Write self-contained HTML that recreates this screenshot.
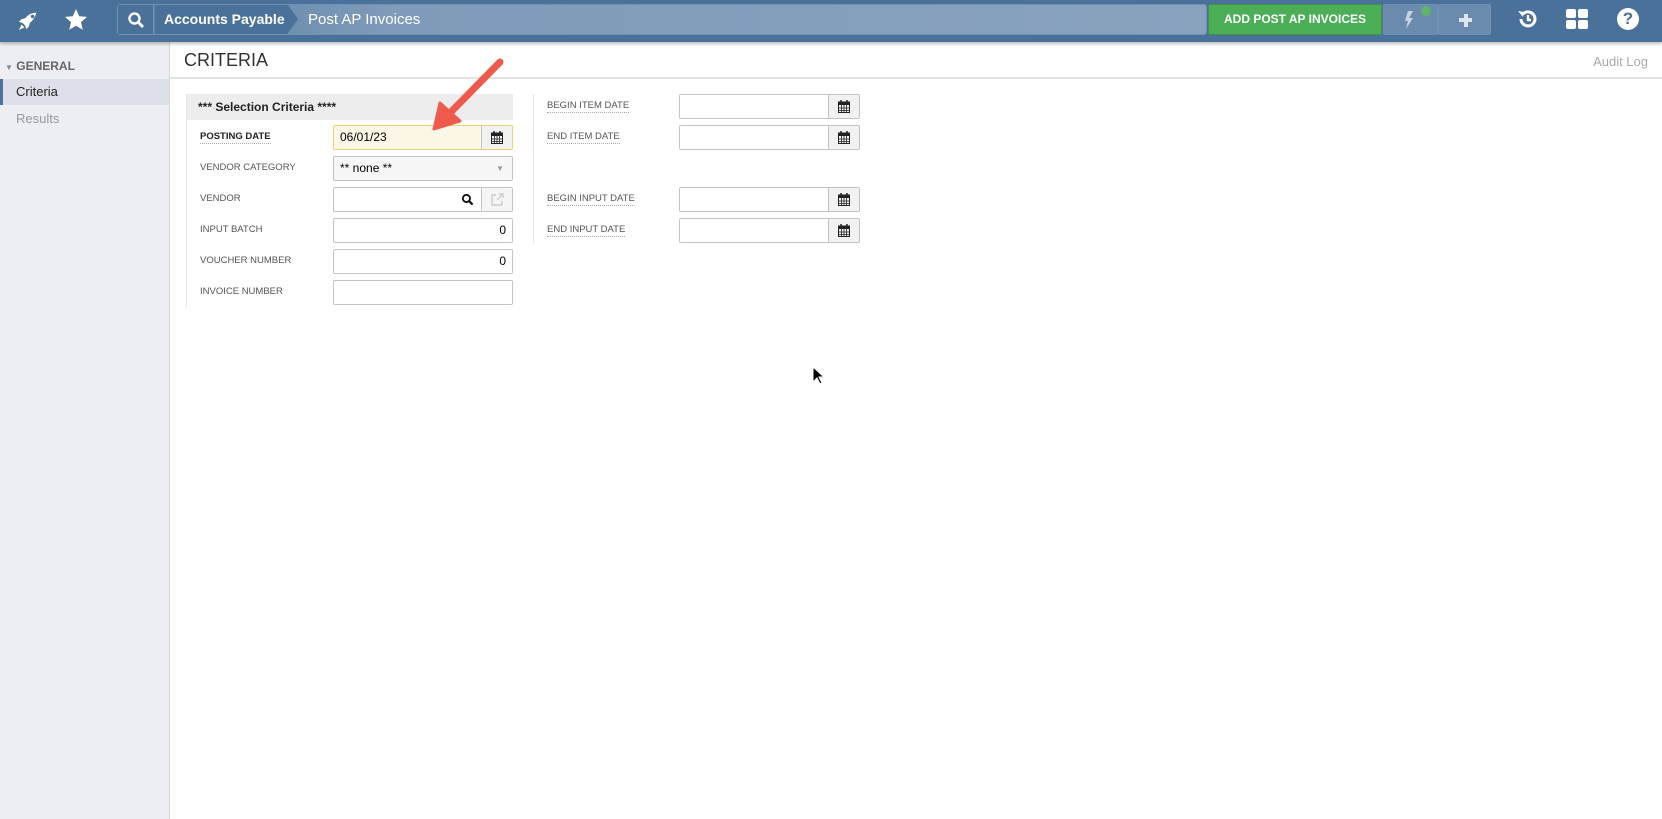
<!DOCTYPE html>
<html><head><meta charset="utf-8"><style>
*{box-sizing:border-box;margin:0;padding:0}
body{width:1662px;height:819px;overflow:hidden;font-family:"Liberation Sans",sans-serif;background:#fff;position:relative;white-space:nowrap}
.top{position:absolute;left:0;top:0;width:1662px;height:42px;background:#4a7199;box-shadow:0 2px 3px rgba(0,0,0,.25);z-index:2}
.crumb{position:absolute;left:117px;top:4px;width:1090px;height:31px;border:1px solid #6f91b3;border-radius:3px;background:linear-gradient(90deg,#5b7ea3 0,#7e9bb9 25%,#89a3bf 100%)}
.crumb .s{position:absolute;left:0;top:0;width:36px;height:29px;border-right:1px solid #6f91b3;background:#4a7199}
.crumb .ap{position:absolute;left:37px;top:0;height:29px;width:133px;background:#4a7199;color:#fff;font-weight:bold;font-size:14px;line-height:29px;padding-left:9px}
.crumb .ar{position:absolute;left:170px;top:0;width:0;height:0;border-top:14.5px solid transparent;border-bottom:14.5px solid transparent;border-left:10px solid #4a7199}
.crumb .pi{position:absolute;left:190px;top:0;line-height:29px;color:#fff;font-size:15px}
.btn{position:absolute;top:4px;height:31px;border:1px solid #6f91b3;border-radius:2px;background:#6a8bad}
.side{position:absolute;left:0;top:42px;width:170px;height:777px;background:#edeef3;border-right:1px solid #d6d8de}
.lbl{position:absolute;font-size:9.5px;color:#555;text-transform:uppercase;border-bottom:1px dotted #aaa;line-height:12px}
.inp{position:absolute;height:25px;border:1px solid #c4c4c4;border-radius:2px;background:#fff;font-size:12px;line-height:23px;padding:0 6px}
.cal{position:absolute;right:0;top:0;width:31px;height:23px;border-left:1px solid #c4c4c4;background:#f2f2f2}
.cal svg{position:absolute;left:9px;top:5px}
</style></head><body>
<div class="top">
<svg style="position:absolute;left:17px;top:10px" width="22" height="22" viewBox="0 0 24 24"><path d="M21 3c-5 0-9 2-12 6l-4 1-3 3 4 1 3 3 1 4 3-3 1-4c4-3 6-7 7-11zM15 7a2 2 0 1 1 0 .1z" fill="#fff"/><path d="M5 16l-3 6 6-3z" fill="#fff"/></svg>
<svg style="position:absolute;left:64px;top:8px" width="24" height="24" viewBox="0 0 24 24"><path d="M12 1l3.2 7.2 7.8.7-6 5.2 1.8 7.7L12 17.8 5.2 21.8 7 14.1 1 8.9l7.8-.7z" fill="#fff"/></svg>
<div class="crumb"><div class="s"><svg style="position:absolute;left:9px;top:6px" width="18" height="18" viewBox="0 0 18 18"><circle cx="7.5" cy="7.5" r="5" stroke="#fff" stroke-width="2.4" fill="none"/><path d="M11 11l5 5" stroke="#fff" stroke-width="2.8"/></svg></div><div class="ap">Accounts Payable</div><div class="ar"></div><div class="pi">Post AP Invoices</div></div>
<div style="position:absolute;left:1208px;top:4px;width:174px;height:31px;background:#4cae57;border:1px solid #3d9448;border-radius:2px;color:#fff;font-weight:bold;font-size:12px;text-align:center;line-height:29px">ADD POST AP INVOICES</div>
<div class="btn" style="left:1383px;width:55px"><svg style="position:absolute;left:19px;top:6px" width="12" height="18" viewBox="0 0 12 18"><path d="M5 0h5L6 7h4L3 18l2-8H2z" fill="#c8d4e1"/></svg><div style="position:absolute;left:37px;top:1px;width:10px;height:10px;border-radius:50%;background:#5fb36a"></div></div>
<div class="btn" style="left:1438px;width:53px"><div style="position:absolute;left:20px;top:13px;width:13px;height:4px;background:#dde5ee"></div><div style="position:absolute;left:24.5px;top:8.5px;width:4px;height:13px;background:#dde5ee"></div></div>
<svg style="position:absolute;left:1517px;top:8px" width="22" height="22" viewBox="0 0 22 22"><path d="M4 11a7 7 0 1 0 2-5" stroke="#fff" stroke-width="3" fill="none"/><path d="M1 3l6 1-1 5z" fill="#fff"/><path d="M11 7v5h3" stroke="#fff" stroke-width="2.4" fill="none"/></svg>
<svg style="position:absolute;left:1566px;top:9px" width="22" height="20" viewBox="0 0 22 20"><rect x="0" y="0" width="10" height="9" rx="2" fill="#fff"/><rect x="12" y="0" width="10" height="9" rx="2" fill="#fff"/><rect x="0" y="11" width="10" height="9" rx="2" fill="#fff"/><rect x="12" y="11" width="10" height="9" rx="2" fill="#fff"/></svg>
<div style="position:absolute;left:1617px;top:8px;width:22px;height:22px;border-radius:50%;background:#fff;color:#4a7199;font-weight:bold;font-size:17px;text-align:center;line-height:22px">?</div>
</div>
<div class="side">
<div style="position:absolute;left:5px;top:17px;font-size:12px;font-weight:bold;color:#666"><span style="font-size:8px;color:#888">▼</span> GENERAL</div>
<div style="position:absolute;left:0;top:37px;width:169px;height:26px;background:#dde0e8;border-left:3px solid #4a7199;font-size:13px;color:#222;line-height:26px;padding-left:13px">Criteria</div>
<div style="position:absolute;left:16px;top:69px;font-size:13px;color:#999">Results</div>
</div>
<div style="position:absolute;left:184px;top:50px;font-size:18px;color:#333">CRITERIA</div>
<div style="position:absolute;right:14px;top:54px;font-size:13px;color:#aaa">Audit Log</div>
<div style="position:absolute;left:170px;top:77px;width:1492px;height:2px;background:#e2e2e2"></div>
<div style="position:absolute;left:186px;top:94px;width:1px;height:213px;background:#e6e6e6"></div>
<div style="position:absolute;left:187px;top:94px;width:326px;height:26px;background:#ededed;font-size:12px;font-weight:bold;color:#222;line-height:26px;padding-left:11px">*** Selection Criteria ****</div>
<div class="lbl" style="left:200px;top:131px;color:#222;font-weight:bold">Posting Date</div>
<div class="inp" style="left:333px;top:125px;width:180px;background:#fdf7e8;border-color:#f0cf6d">06/01/23<div class="cal"><svg width="12" height="13" viewBox="0 0 12 13"><rect x="0.5" y="2" width="11" height="10.5" fill="none" stroke="#222"/><rect x="0" y="2" width="12" height="3" fill="#222"/><path d="M3 0v3M9 0v3" stroke="#222" stroke-width="1.5"/><path d="M0 8h12M0 10.5h12M3.5 5v8M6 5v8M8.5 5v8" stroke="#222" stroke-width=".8"/></svg></div></div>
<div class="lbl" style="left:200px;top:162px;border:0">Vendor Category</div>
<div class="inp" style="left:333px;top:156px;width:180px;background:#f7f7f7">** none **<span style="position:absolute;right:8px;top:0;font-size:8px;color:#999">▼</span></div>
<div class="lbl" style="left:200px;top:193px;border:0">Vendor</div>
<div class="inp" style="left:333px;top:187px;width:180px"><svg style="position:absolute;right:38px;top:5px" width="13" height="13" viewBox="0 0 18 18"><circle cx="7.5" cy="7.5" r="5" stroke="#111" stroke-width="2.6" fill="none"/><path d="M11 11l5 5" stroke="#111" stroke-width="3"/></svg><div class="cal" style="background:#f5f5f5"><svg width="13" height="13" viewBox="0 0 13 13"><path d="M5 2H1v10h10V8" stroke="#ccc" stroke-width="1.4" fill="none"/><path d="M6 7l6-6M8 1h4v4" stroke="#ccc" stroke-width="1.4" fill="none"/></svg></div></div>
<div class="lbl" style="left:200px;top:224px;border:0">Input Batch</div>
<div class="inp" style="left:333px;top:218px;width:180px;text-align:right">0</div>
<div class="lbl" style="left:200px;top:255px;border:0">Voucher Number</div>
<div class="inp" style="left:333px;top:249px;width:180px;text-align:right">0</div>
<div class="lbl" style="left:200px;top:286px;border:0">Invoice Number</div>
<div class="inp" style="left:333px;top:280px;width:180px"></div>
<div style="position:absolute;left:533px;top:94px;width:1px;height:150px;background:#e6e6e6"></div>
<div class="lbl" style="left:547px;top:100px">Begin Item Date</div>
<div class="inp" style="left:679px;top:94px;width:181px"><div class="cal"><svg width="12" height="13" viewBox="0 0 12 13"><rect x="0.5" y="2" width="11" height="10.5" fill="none" stroke="#222"/><rect x="0" y="2" width="12" height="3" fill="#222"/><path d="M3 0v3M9 0v3" stroke="#222" stroke-width="1.5"/><path d="M0 8h12M0 10.5h12M3.5 5v8M6 5v8M8.5 5v8" stroke="#222" stroke-width=".8"/></svg></div></div>
<div class="lbl" style="left:547px;top:131px">End Item Date</div>
<div class="inp" style="left:679px;top:125px;width:181px"><div class="cal"><svg width="12" height="13" viewBox="0 0 12 13"><rect x="0.5" y="2" width="11" height="10.5" fill="none" stroke="#222"/><rect x="0" y="2" width="12" height="3" fill="#222"/><path d="M3 0v3M9 0v3" stroke="#222" stroke-width="1.5"/><path d="M0 8h12M0 10.5h12M3.5 5v8M6 5v8M8.5 5v8" stroke="#222" stroke-width=".8"/></svg></div></div>
<div class="lbl" style="left:547px;top:193px">Begin Input Date</div>
<div class="inp" style="left:679px;top:187px;width:181px"><div class="cal"><svg width="12" height="13" viewBox="0 0 12 13"><rect x="0.5" y="2" width="11" height="10.5" fill="none" stroke="#222"/><rect x="0" y="2" width="12" height="3" fill="#222"/><path d="M3 0v3M9 0v3" stroke="#222" stroke-width="1.5"/><path d="M0 8h12M0 10.5h12M3.5 5v8M6 5v8M8.5 5v8" stroke="#222" stroke-width=".8"/></svg></div></div>
<div class="lbl" style="left:547px;top:224px">End Input Date</div>
<div class="inp" style="left:679px;top:218px;width:181px"><div class="cal"><svg width="12" height="13" viewBox="0 0 12 13"><rect x="0.5" y="2" width="11" height="10.5" fill="none" stroke="#222"/><rect x="0" y="2" width="12" height="3" fill="#222"/><path d="M3 0v3M9 0v3" stroke="#222" stroke-width="1.5"/><path d="M0 8h12M0 10.5h12M3.5 5v8M6 5v8M8.5 5v8" stroke="#222" stroke-width=".8"/></svg></div></div>
<svg style="position:absolute;left:0;top:0" width="1662" height="819">
<line x1="500" y1="62" x2="448" y2="115" stroke="#ee5a4c" stroke-width="7" stroke-linecap="round"/>
<path d="M434 129l6-26 20 18z" fill="#ee5a4c" stroke="#ee5a4c" stroke-width="3" stroke-linejoin="round"/>
<path d="M813 367v15l4-4 3 6 2-1-3-6h5z" fill="#000" stroke="#fff" stroke-width="1"/>
</svg>
</body></html>
